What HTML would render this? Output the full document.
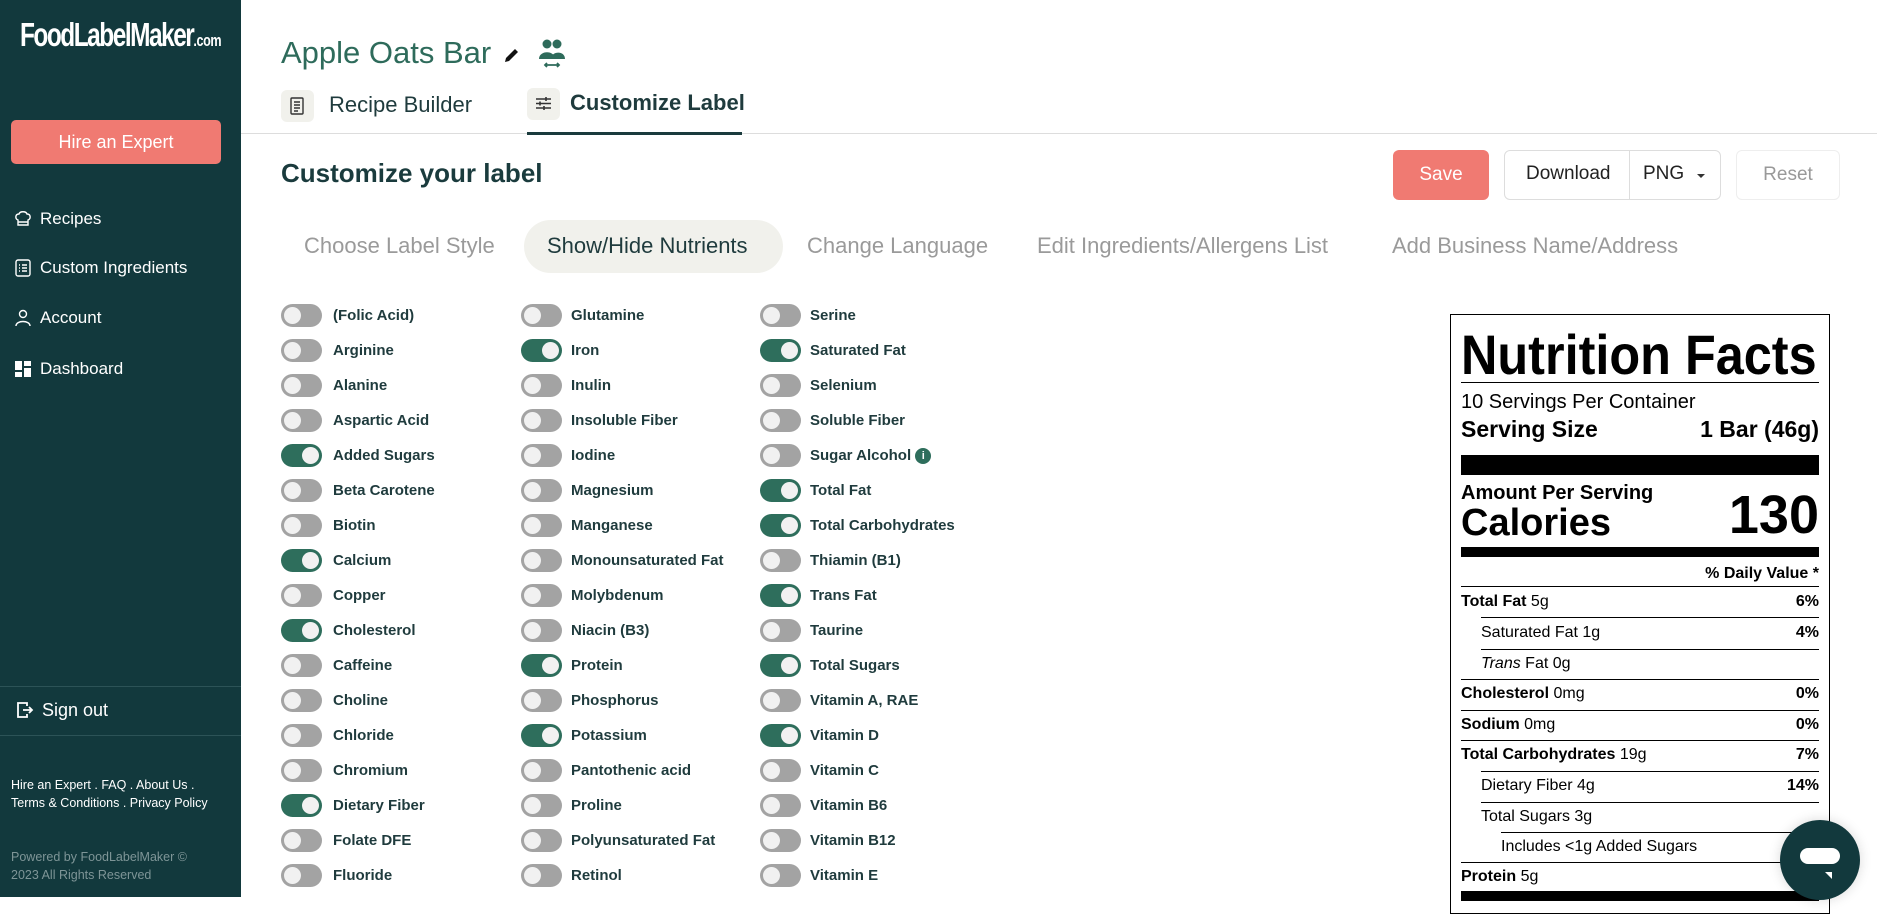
<!DOCTYPE html>
<html><head><meta charset="utf-8">
<style>
*{margin:0;padding:0;box-sizing:border-box}
body{width:1877px;height:897px;overflow:hidden;font-family:"Liberation Sans",sans-serif;background:#fff;position:relative;color:#1a3b3d}
.abs{position:absolute}
#side{left:0;top:0;width:241px;height:897px;background:#12393d;color:#fff}
.logo{left:20px;top:16px;font-size:33px;font-weight:bold;letter-spacing:-2px;transform:scaleX(.74);transform-origin:left;white-space:nowrap}
.logo small{font-size:17px;letter-spacing:-.5px}
.hire{left:11px;top:120px;width:210px;height:44px;background:#f07a72;border-radius:5px;color:#fff;font-size:18px;text-align:center;line-height:44px}
.nav{left:14px;font-size:17px;display:flex;align-items:center;gap:8px;height:24px}
.nav svg{width:18px;height:18px}
.sep{left:0;width:241px;height:1px;background:#2c5357}
.foot{left:11px;font-size:12.5px;line-height:18px}
.tog{position:absolute;width:41px;height:23px;border-radius:12px;background:#a3a3a3}
.tog::after{content:"";position:absolute;top:3px;left:3px;width:17px;height:17px;border-radius:50%;background:#f1f1f1}
.tog.on{background:#2e6e5c}
.tog.on::after{left:21px}
.lab{position:absolute;font-size:15px;font-weight:bold;color:#1f3b3d;line-height:23px;white-space:nowrap}
.tab2{top:233px;font-size:22px;color:#9a9a9a;white-space:nowrap}
#nf{left:1450px;top:314px;width:380px;height:600px;border:1px solid #000;color:#000}
.r{position:absolute;left:10px;right:10px;font-size:16px;line-height:20px;white-space:nowrap}
.r b{font-weight:bold}
.r .p{position:absolute;right:0;font-weight:bold}
.ln{position:absolute;right:10px;height:1px;background:#000}
</style></head><body>
<div id="side" class="abs">
 <div class="abs logo">FoodLabelMaker<small>.com</small></div>
 <div class="abs hire">Hire an Expert</div>
 <div class="abs nav" style="top:207px"><svg viewBox="0 0 18 18" fill="none" stroke="#fff" stroke-width="1.4"><path d="M4 10C1 9 1 4 5 4C6 1 12 1 13 4C17 4 17 9 14 10V15H4Z M4 12H14"/></svg>Recipes</div>
 <div class="abs nav" style="top:256px"><svg viewBox="0 0 18 18" fill="none" stroke="#fff" stroke-width="1.4"><rect x="2" y="1" width="14" height="16" rx="2"/><path d="M5 6H6M8 6H13M5 9H6M8 9H13M5 12H6M8 12H13"/></svg>Custom Ingredients</div>
 <div class="abs nav" style="top:306px"><svg viewBox="0 0 18 18" fill="none" stroke="#fff" stroke-width="1.4"><circle cx="9" cy="5" r="3.5"/><path d="M2 17C2 11 16 11 16 17"/></svg>Account</div>
 <div class="abs nav" style="top:357px"><svg viewBox="0 0 18 18" fill="#fff"><rect x="1" y="1" width="7" height="9"/><rect x="10" y="1" width="7" height="5"/><rect x="1" y="12" width="7" height="5"/><rect x="10" y="8" width="7" height="9"/></svg>Dashboard</div>
 <div class="abs sep" style="top:686px"></div>
 <div class="abs nav" style="top:698px;left:16px;font-size:18px"><svg viewBox="0 0 18 18" fill="none" stroke="#fff" stroke-width="1.8"><path d="M11 5V2H2V16H11V13"/><path d="M7 9H16M13 6L16 9L13 12" /></svg>Sign out</div>
 <div class="abs sep" style="top:735px"></div>
 <div class="abs foot" style="top:776px">Hire an Expert . FAQ . About Us .<br>Terms &amp; Conditions . Privacy Policy</div>
 <div class="abs foot" style="top:848px;color:#7e9597">Powered by FoodLabelMaker ©<br>2023 All Rights Reserved</div>
</div>

<div class="abs" style="left:281px;top:35px;font-size:31px;color:#2e6b5b;white-space:nowrap">Apple Oats Bar</div>
<svg class="abs" style="left:502px;top:45px" width="20" height="20" viewBox="0 0 20 20"><path d="M3 17L4 13L13 4L16 7L7 16Z" fill="#111"/></svg>
<svg class="abs" style="left:537px;top:38px" width="30" height="32" viewBox="0 0 30 32"><circle cx="10" cy="6" r="4.5" fill="#2e6b5b"/><circle cx="20" cy="6" r="4.5" fill="#2e6b5b"/><path d="M2 21C2 12 18 12 18 21Z M14 21C14 13 28 12 28 21Z" fill="#2e6b5b"/><path d="M8 27H22M10 25L8 27L10 29M20 25L22 27L20 29" stroke="#2e6b5b" stroke-width="1.8" fill="none"/></svg>

<div class="abs" style="left:281px;top:90px;width:33px;height:32px;background:#f1f1ec;border-radius:6px"></div>
<svg class="abs" style="left:289px;top:97px" width="16" height="18" viewBox="0 0 16 18" fill="none" stroke="#333" stroke-width="1.4"><rect x="2" y="1" width="12" height="16" rx="1"/><path d="M5 5H11M5 8H11M5 11H11M5 14H9"/></svg>
<div class="abs" style="left:329px;top:92px;font-size:22px;color:#1f3b3d">Recipe Builder</div>
<div class="abs" style="left:527px;top:88px;width:33px;height:32px;background:#f1f1ec;border-radius:6px"></div>
<svg class="abs" style="left:535px;top:95px" width="17" height="17" viewBox="0 0 17 17" stroke="#333" stroke-width="1.6"><path d="M1 4H16M1 8.5H16M1 13H16M11 2V6M5 6.5V10.5M9 11V15"/></svg>
<div class="abs" style="left:570px;top:90px;font-size:22px;font-weight:bold;color:#1f3b3d">Customize Label</div>
<div class="abs" style="left:241px;top:133px;width:1636px;height:1px;background:#ddd"></div>
<div class="abs" style="left:527px;top:132px;width:215px;height:3px;background:#1a3b3d"></div>

<div class="abs" style="left:281px;top:158px;font-size:26px;font-weight:bold;color:#1a3b3d">Customize your label</div>
<div class="abs" style="left:1393px;top:150px;width:96px;height:50px;background:#f07a72;border-radius:6px;color:#fff;font-size:19px;text-align:center;line-height:50px">Save</div>
<div class="abs" style="left:1504px;top:150px;width:217px;height:50px;border:1px solid #ddd;border-radius:6px"></div>
<div class="abs" style="left:1629px;top:150px;width:1px;height:50px;background:#ddd"></div>
<div class="abs" style="left:1526px;top:163px;font-size:19px;color:#222">Download</div>
<div class="abs" style="left:1643px;top:163px;font-size:19px;color:#222">PNG</div>
<div class="abs" style="left:1697px;top:174px;width:0;height:0;border-left:4px solid transparent;border-right:4px solid transparent;border-top:4px solid #333"></div>
<div class="abs" style="left:1736px;top:150px;width:104px;height:50px;border:1px solid #eee;border-radius:6px;color:#999;font-size:19px;text-align:center;line-height:48px">Reset</div>

<div class="abs" style="left:524px;top:220px;width:259px;height:53px;background:#f1f1ec;border-radius:27px"></div>
<div class="abs tab2" style="left:304px">Choose Label Style</div>
<div class="abs tab2" style="left:547px;color:#1f3b3d">Show/Hide Nutrients</div>
<div class="abs tab2" style="left:807px">Change Language</div>
<div class="abs tab2" style="left:1037px">Edit Ingredients/Allergens List</div>
<div class="abs tab2" style="left:1392px">Add Business Name/Address</div>

<div id="toggles"></div>
<script>
const cols=[[281,333,[["(Folic Acid)",0],["Arginine",0],["Alanine",0],["Aspartic Acid",0],["Added Sugars",1],["Beta Carotene",0],["Biotin",0],["Calcium",1],["Copper",0],["Cholesterol",1],["Caffeine",0],["Choline",0],["Chloride",0],["Chromium",0],["Dietary Fiber",1],["Folate DFE",0],["Fluoride",0]]],
[521,571,[["Glutamine",0],["Iron",1],["Inulin",0],["Insoluble Fiber",0],["Iodine",0],["Magnesium",0],["Manganese",0],["Monounsaturated Fat",0],["Molybdenum",0],["Niacin (B3)",0],["Protein",1],["Phosphorus",0],["Potassium",1],["Pantothenic acid",0],["Proline",0],["Polyunsaturated Fat",0],["Retinol",0]]],
[760,810,[["Serine",0],["Saturated Fat",1],["Selenium",0],["Soluble Fiber",0],["Sugar Alcohol",0],["Total Fat",1],["Total Carbohydrates",1],["Thiamin (B1)",0],["Trans Fat",1],["Taurine",0],["Total Sugars",1],["Vitamin A, RAE",0],["Vitamin D",1],["Vitamin C",0],["Vitamin B6",0],["Vitamin B12",0],["Vitamin E",0]]]];
let h="";
cols.forEach(c=>c[2].forEach((it,i)=>{const y=304+i*35;
h+=`<div class="tog${it[1]?' on':''}" style="left:${c[0]}px;top:${y}px"></div><div class="lab" style="left:${c[1]}px;top:${y}px">${it[0]}${it[0]=="Sugar Alcohol"?' <span style="display:inline-block;width:16px;height:16px;border-radius:50%;background:#2e6e5c;color:#fff;font-size:11px;line-height:16px;text-align:center;vertical-align:1px">i</span>':''}</div>`;}));
document.getElementById("toggles").innerHTML=h;
</script>

<div id="nf" class="abs">
 <div class="r" style="top:12px;font-size:56px;line-height:56px;font-weight:bold;transform:scaleX(.9);transform-origin:left">Nutrition Facts</div>
 <div class="ln" style="left:10px;top:67px"></div>
 <div class="r" style="top:75px;font-size:20px;line-height:24px">10 Servings Per Container</div>
 <div class="r" style="top:100px;font-size:23px;line-height:28px;font-weight:bold">Serving Size<span style="position:absolute;right:0">1 Bar (46g)</span></div>
 <div class="ln" style="left:10px;top:140px;height:20px"></div>
 <div class="r" style="top:166px;font-size:20px;line-height:24px;font-weight:bold">Amount Per Serving</div>
 <div class="r" style="top:187px;font-size:38px;line-height:42px;font-weight:bold">Calories</div>
 <div class="r" style="top:170px;font-size:54px;line-height:60px;font-weight:bold;text-align:right">130</div>
 <div class="ln" style="left:10px;top:232px;height:10px"></div>
 <div class="r" style="top:249px;font-size:16px;font-weight:bold;text-align:right">% Daily Value *</div>
 <div class="ln" style="left:10px;top:271px"></div>
 <div class="r" style="top:277px"><b>Total Fat</b> 5g<span class="p">6%</span></div>
 <div class="ln" style="left:30px;top:302px"></div>
 <div class="r" style="top:308px;left:30px">Saturated Fat 1g<span class="p">4%</span></div>
 <div class="ln" style="left:30px;top:334px"></div>
 <div class="r" style="top:339px;left:30px"><i>Trans</i> Fat 0g</div>
 <div class="ln" style="left:10px;top:364px"></div>
 <div class="r" style="top:369px"><b>Cholesterol</b> 0mg<span class="p">0%</span></div>
 <div class="ln" style="left:10px;top:395px"></div>
 <div class="r" style="top:400px"><b>Sodium</b> 0mg<span class="p">0%</span></div>
 <div class="ln" style="left:10px;top:425px"></div>
 <div class="r" style="top:430px"><b>Total Carbohydrates</b> 19g<span class="p">7%</span></div>
 <div class="ln" style="left:30px;top:456px"></div>
 <div class="r" style="top:461px;left:30px">Dietary Fiber 4g<span class="p">14%</span></div>
 <div class="ln" style="left:30px;top:487px"></div>
 <div class="r" style="top:492px;left:30px">Total Sugars 3g</div>
 <div class="ln" style="left:50px;top:517px"></div>
 <div class="r" style="top:522px;left:50px">Includes &lt;1g Added Sugars</div>
 <div class="ln" style="left:10px;top:547px"></div>
 <div class="r" style="top:552px"><b>Protein</b> 5g</div>
 <div class="ln" style="left:10px;top:576px;height:10px"></div>
</div>

<div class="abs" style="left:1780px;top:820px;width:80px;height:80px;border-radius:50%;background:#12393d;box-shadow:0 0 12px rgba(0,0,0,.15)"></div>
<div class="abs" style="left:1800px;top:848px;width:40px;height:16px;border-radius:8px;background:#fff"></div>
<svg class="abs" style="left:1825px;top:872px" width="8" height="8" viewBox="0 0 8 8"><path d="M0 0H7V7Z" fill="#fff"/></svg>
</body></html>
